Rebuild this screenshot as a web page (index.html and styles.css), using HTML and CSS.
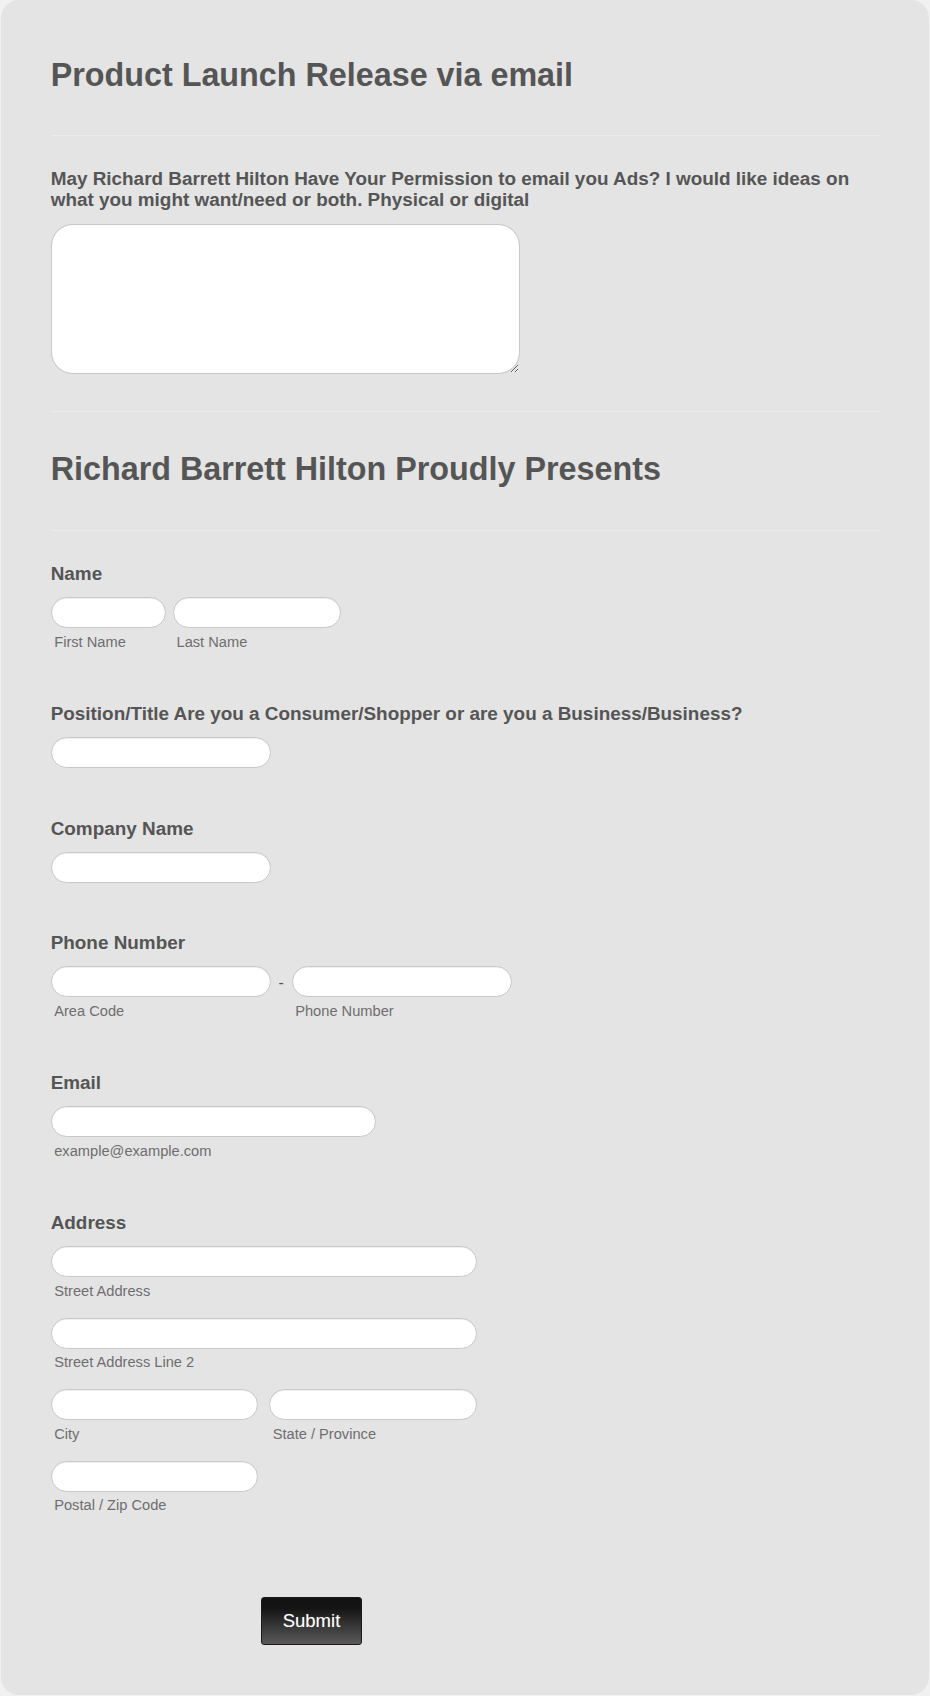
FILE: index.html
```html
<!DOCTYPE html>
<html lang="en">
<head>
<meta charset="utf-8">
<title>Product Launch Release via email</title>
<link rel="stylesheet" href="styles.css">
</head>
<body>
<div class="form-card">
  <h1 class="form-title">Product Launch Release via email</h1>
  <div class="divider"></div>

  <div class="field field-first">
    <label class="field-label">May Richard Barrett Hilton Have Your Permission to email you Ads? I would like ideas on what you might want/need or both. Physical or digital</label>
    <textarea class="textarea"></textarea>
  </div>

  <div class="divider divider-after-field"></div>
  <h2 class="form-title form-title-2">Richard Barrett Hilton Proudly Presents</h2>
  <div class="divider"></div>

  <div class="field field-first">
    <label class="field-label">Name</label>
    <div class="row row-name">
      <div class="sub-group">
        <input class="input w-first" type="text">
        <span class="sublabel">First Name</span>
      </div>
      <div class="sub-group">
        <input class="input w-last" type="text">
        <span class="sublabel">Last Name</span>
      </div>
    </div>
  </div>

  <div class="field">
    <label class="field-label">Position/Title Are you a Consumer/Shopper or are you a Business/Business?</label>
    <input class="input w-mid" type="text">
  </div>

  <div class="field">
    <label class="field-label">Company Name</label>
    <input class="input w-mid" type="text">
  </div>

  <div class="field">
    <label class="field-label">Phone Number</label>
    <div class="row">
      <div class="sub-group">
        <input class="input w-mid" type="text">
        <span class="sublabel">Area Code</span>
      </div>
      <span class="dash">-</span>
      <div class="sub-group">
        <input class="input w-phone" type="text">
        <span class="sublabel">Phone Number</span>
      </div>
    </div>
  </div>

  <div class="field">
    <label class="field-label">Email</label>
    <div class="sub-group">
      <input class="input w-email" type="text">
      <span class="sublabel">example@example.com</span>
    </div>
  </div>

  <div class="field">
    <label class="field-label">Address</label>
    <div class="address-grid">
      <div class="sub-group span-2">
        <input class="input w-full" type="text">
        <span class="sublabel">Street Address</span>
      </div>
      <div class="sub-group span-2">
        <input class="input w-full" type="text">
        <span class="sublabel">Street Address Line 2</span>
      </div>
      <div class="sub-group">
        <input class="input w-full" type="text">
        <span class="sublabel">City</span>
      </div>
      <div class="sub-group">
        <input class="input w-full" type="text">
        <span class="sublabel">State / Province</span>
      </div>
      <div class="sub-group">
        <input class="input w-full" type="text">
        <span class="sublabel">Postal / Zip Code</span>
      </div>
    </div>
  </div>

  <div class="buttons">
    <button class="submit" type="button">Submit</button>
  </div>
</div>
</body>
</html>
```

FILE: styles.css
```css
html, body {
  margin: 0;
  padding: 0;
}

body {
  background: #f1f1f1;
  font-family: "Liberation Sans", Arial, sans-serif;
  color: #555555;
}

.form-card {
  margin: 0 1px 1px 1px;
  background: #e4e4e4;
  border-radius: 18px;
  padding: 56.4px 48px 50px 49.7px;
  box-sizing: border-box;
}

.form-title {
  margin: 0;
  font-size: 32.3px;
  line-height: 1.2;
  font-weight: bold;
  color: #555555;
}

.form-title-2 {
  margin-top: 38.4px;
}

.divider {
  height: 1px;
  background: #ebebeb;
  margin-top: 39.84px;
}

.divider-after-field {
  margin-top: 37px;
}

.form-title-2 + .divider {
  margin-top: 40.84px;
}

.field {
  margin-top: 50.35px;
}

.field-first {
  margin-top: 33.15px;
}

.field-label {
  display: block;
  font-size: 18.9px;
  line-height: 20.68px;
  font-weight: bold;
  color: #555555;
  margin-bottom: 12.67px;
}

.textarea {
  display: block;
  box-sizing: border-box;
  width: 469px;
  height: 150px;
  margin: 13.5px 0 0 0;
  padding: 4px 8px;
  background: #ffffff;
  border: 1px solid #c8c8c8;
  border-radius: 22px;
  box-shadow: 0 0 1px rgba(0, 0, 0, 0.05);
  font-family: inherit;
}

.input {
  display: block;
  box-sizing: border-box;
  height: 30.8px;
  margin: 0;
  padding: 0 10px;
  background: #ffffff;
  border: 1px solid #c8c8c8;
  border-radius: 16px;
  box-shadow: inset 0 1px 0 #f0f0f0;
  font-family: inherit;
  font-size: 15px;
}

.w-first { width: 115px; }
.w-last { width: 168px; }
.w-mid { width: 220px; }
.w-phone { width: 220px; }
.w-email { width: 325px; }
.w-full { width: 100%; }

.row {
  display: flex;
  align-items: flex-start;
}

.row-name {
  gap: 7.3px;
}

.sub-group {
  display: flex;
  flex-direction: column;
}

.sublabel {
  display: block;
  font-size: 14.65px;
  line-height: 18px;
  color: #6e6e6e;
  margin: 4.62px 0 2.88px 0;
  padding-left: 3.5px;
}

.dash {
  width: 21px;
  text-align: center;
  font-size: 16px;
  line-height: 30.8px;
  color: #555555;
  padding-top: 2px;
}

.address-grid {
  display: grid;
  width: 426px;
  grid-template-columns: 207.5px 207.5px;
  column-gap: 11px;
  row-gap: 15.3px;
}

.span-2 {
  grid-column: span 2;
}

.buttons {
  margin-top: 79.4px;
  padding-left: 210.3px;
}

.submit {
  display: block;
  width: 101px;
  height: 48px;
  margin: 0;
  padding: 0;
  border: 1px solid #1a1a1a;
  border-radius: 3px;
  background: linear-gradient(#121212 0%, #141414 22%, #2a2929 45%, #444343 75%, #5b5959 100%);
  color: #ffffff;
  font-family: "Liberation Sans", Arial, sans-serif;
  font-size: 18.5px;
  text-shadow: 0 0 1px rgba(255, 255, 255, 0.3);
}
```
